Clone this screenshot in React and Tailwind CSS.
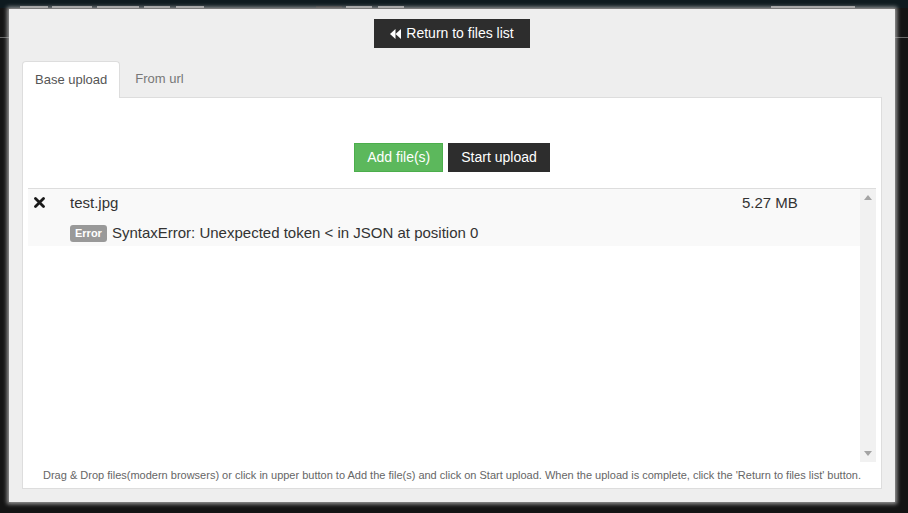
import React from "react";

function BackIcon() {
  return (
    <svg width="11" height="10" viewBox="0 0 11 10" className="inline-block">
      <path d="M5.5 0 L0 5 L5.5 10 Z" fill="#fff" />
      <path d="M11 0 L5.5 5 L11 10 Z" fill="#fff" />
    </svg>
  );
}

function XIcon() {
  return (
    <svg width="11" height="11" viewBox="0 0 11 11">
      <path d="M1.5 1.5 L9.5 9.5 M9.5 1.5 L1.5 9.5" stroke="#1a1a1a" strokeWidth="2.8" strokeLinecap="round" />
    </svg>
  );
}

export default function App() {
  const font = { fontFamily: '"Liberation Sans", Arial, sans-serif' };
  return (
    <div className="relative w-[908px] h-[513px] overflow-hidden bg-[#141414]" style={font}>
      {/* page behind the modal */}
      <div className="absolute left-0 top-0 w-[908px] h-[8px] bg-[#0e1a1f]" />
      <div className="absolute top-[6px] left-[20px] w-[28px] h-[2px] bg-[#9a9a9a]" />
      <div className="absolute top-[6px] left-[52px] w-[40px] h-[2px] bg-[#9a9a9a]" />
      <div className="absolute top-[6px] left-[97px] w-[42px] h-[2px] bg-[#9a9a9a]" />
      <div className="absolute top-[6px] left-[144px] w-[26px] h-[2px] bg-[#9a9a9a]" />
      <div className="absolute top-[6px] left-[176px] w-[28px] h-[2px] bg-[#9a9a9a]" />
      <div className="absolute top-[6px] left-[316px] w-[26px] h-[2px] bg-[#222]" />
      <div className="absolute top-[6px] left-[346px] w-[26px] h-[2px] bg-[#9a9a9a]" />
      <div className="absolute top-[6px] left-[378px] w-[26px] h-[2px] bg-[#9a9a9a]" />
      <div className="absolute top-[6px] left-[771px] w-[84px] h-[2px] bg-[#9a9a9a]" />
      <div className="absolute top-[37px] left-0 w-[908px] h-[1px] bg-[#6a6a6a]" />

      <div className="relative pt-[9px] pl-[9px]">
        <div className="w-[886px] h-[493px] bg-[#eeeeee] shadow-[0_0_4px_2px_rgba(190,190,190,0.8)] px-[13px] flex flex-col">
          <div className="flex justify-center pt-[10px]">
            <button className="h-[29px] px-[16px] bg-[#2d2d2d] text-white text-[14px] flex items-center gap-[5px]">
              <BackIcon />
              <span>Return to files list</span>
            </button>
          </div>

          <div className="mt-[13px] flex h-[36px] items-end">
            <div className="h-[37px] px-[12px] bg-white border border-[#ddd] border-b-0 rounded-t-[4px] text-[13px] text-[#555] flex items-center relative top-[1px]">
              Base upload
            </div>
            <div className="h-[36px] px-[15px] text-[13px] text-[#777] flex items-center">From url</div>
          </div>

          <div className="h-[392px] bg-white border border-[#ddd] flex flex-col px-[5px]">
            <div className="mt-[45px] flex justify-center gap-[5px]">
              <button className="h-[29px] px-[12px] bg-[#5cb85c] text-white text-[14px] border border-[#4cae4c]">Add file(s)</button>
              <button className="h-[29px] px-[13px] bg-[#2d2d2d] text-white text-[14px]">Start upload</button>
            </div>

            <div className="mt-[16px] h-[274px] border-t border-[#ddd] flex">
              <div className="flex-1">
                <div className="bg-[#f9f9f9] h-[57px] flex text-[#333]">
                  <div className="w-[42px] pl-[6px] pt-[8px]">
                    <XIcon />
                  </div>
                  <div className="flex-1 flex flex-col">
                    <div className="h-[28px] flex items-center text-[15px]">test.jpg</div>
                    <div className="mt-[3px] h-[26px] flex items-center text-[15px]">
                      <span className="bg-[#999] text-white font-bold text-[11px] rounded-[3px] px-[5px] h-[17px] leading-[17px] mr-[5px]">Error</span>
                      SyntaxError: Unexpected token &lt; in JSON at position 0
                    </div>
                  </div>
                  <div className="w-[118px] h-[28px] flex items-center text-[15px]">5.27 MB</div>
                </div>
              </div>
              <div className="w-[16px] bg-[#f1f1f1] flex flex-col justify-between items-center py-[6px]">
                <svg width="8" height="5" viewBox="0 0 8 5"><path d="M0 5 L4 0 L8 5 Z" fill="#a3a3a3" /></svg>
                <svg width="8" height="5" viewBox="0 0 8 5"><path d="M0 0 L4 5 L8 0 Z" fill="#a3a3a3" /></svg>
              </div>
            </div>

            <div className="mt-[5px] text-center text-[11px] text-[#666]">
              Drag &amp; Drop files(modern browsers) or click in upper button to Add the file(s) and click on Start upload. When the upload is complete, click the 'Return to files list' button.
            </div>
          </div>
        </div>
      </div>
    </div>
  );
}
